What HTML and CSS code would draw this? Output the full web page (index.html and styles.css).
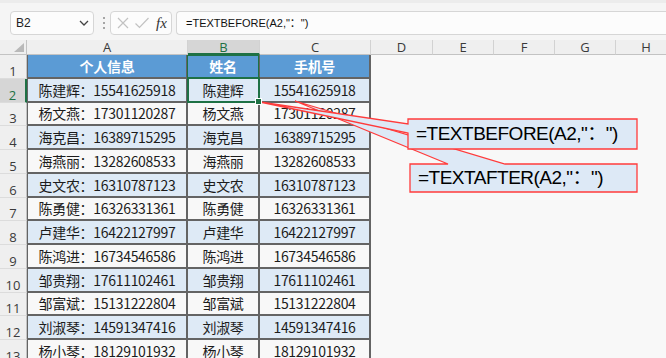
FILE: index.html
```html
<!DOCTYPE html>
<html lang="zh-CN">
<head>
    <meta charset="UTF-8">
    <title>TEXTBEFORE / TEXTAFTER</title>
    <link rel="stylesheet" href="styles.css">
</head>
<body>

<!-- Name box + formula bar -->
<div class="toolbar">
    <div class="namebox">
        <span>B2</span>
        <svg width="10" height="6" viewBox="0 0 10 6"><polyline points="1,1 5,5 9,1" fill="none" stroke="#444" stroke-width="1.3"/></svg>
    </div>
    <svg class="grip" width="4" height="24" viewBox="0 0 4 24">
        <circle cx="2" cy="7" r="1" fill="#8a8a8a"/>
        <circle cx="2" cy="12" r="1" fill="#8a8a8a"/>
        <circle cx="2" cy="17" r="1" fill="#8a8a8a"/>
    </svg>
    <div class="funcbox">
        <svg width="14" height="14" viewBox="0 0 14 14"><path d="M2 2 L12 12 M12 2 L2 12" stroke="#c2c2c2" stroke-width="1.2"/></svg>
        <svg width="16" height="14" viewBox="0 0 16 14"><path d="M1.5 7.5 L5.5 11.5 L14.5 2" fill="none" stroke="#c2c2c2" stroke-width="1.2"/></svg>
        <span class="fx">fx</span>
    </div>
    <div class="formula">=TEXTBEFORE(A2,"：")</div>
</div>

<!-- Sheet -->
<div class="sheet">
    <div class="corner"><svg width="10" height="9" viewBox="0 0 10 9"><polygon points="0,9 10,0 10,9" fill="#b9b9b9"/></svg></div>
    <div class="ch">A</div>
    <div class="ch sel">B</div>
    <div class="ch">C</div>
    <div class="ch">D</div>
    <div class="ch">E</div>
    <div class="ch">F</div>
    <div class="ch">G</div>
    <div class="ch">H</div>

    <div class="rh">1</div>
    <div class="c hd first">个人信息</div>
    <div class="c hd pick-top">姓名</div>
    <div class="c hd">手机号</div>
    <div class="fill"></div>

    <div class="rh sel">2</div>
    <div class="c alt first">陈建辉：15541625918</div>
    <div class="c alt pick">陈建辉</div>
    <div class="c alt">15541625918</div>
    <div class="fill"></div>

    <div class="rh">3</div>
    <div class="c first">杨文燕：17301120287</div>
    <div class="c">杨文燕</div>
    <div class="c">17301120287</div>
    <div class="fill"></div>

    <div class="rh">4</div>
    <div class="c alt first">海克昌：16389715295</div>
    <div class="c alt">海克昌</div>
    <div class="c alt">16389715295</div>
    <div class="fill"></div>

    <div class="rh">5</div>
    <div class="c first">海燕丽：13282608533</div>
    <div class="c">海燕丽</div>
    <div class="c">13282608533</div>
    <div class="fill"></div>

    <div class="rh">6</div>
    <div class="c alt first">史文农：16310787123</div>
    <div class="c alt">史文农</div>
    <div class="c alt">16310787123</div>
    <div class="fill"></div>

    <div class="rh">7</div>
    <div class="c first">陈勇健：16326331361</div>
    <div class="c">陈勇健</div>
    <div class="c">16326331361</div>
    <div class="fill"></div>

    <div class="rh">8</div>
    <div class="c alt first">卢建华：16422127997</div>
    <div class="c alt">卢建华</div>
    <div class="c alt">16422127997</div>
    <div class="fill"></div>

    <div class="rh">9</div>
    <div class="c first">陈鸿进：16734546586</div>
    <div class="c">陈鸿进</div>
    <div class="c">16734546586</div>
    <div class="fill"></div>

    <div class="rh">10</div>
    <div class="c alt first">邹贵翔：17611102461</div>
    <div class="c alt">邹贵翔</div>
    <div class="c alt">17611102461</div>
    <div class="fill"></div>

    <div class="rh">11</div>
    <div class="c first">邹富斌：15131222804</div>
    <div class="c">邹富斌</div>
    <div class="c">15131222804</div>
    <div class="fill"></div>

    <div class="rh">12</div>
    <div class="c alt first">刘淑琴：14591347416</div>
    <div class="c alt">刘淑琴</div>
    <div class="c alt">14591347416</div>
    <div class="fill"></div>

    <div class="rh">13</div>
    <div class="c first">杨小琴：18129101932</div>
    <div class="c">杨小琴</div>
    <div class="c">18129101932</div>
    <div class="fill"></div>
</div>

<!-- Callouts drawn over the sheet -->
<div class="callouts">
    <svg width="666" height="358" viewBox="0 0 666 358">
        <path d="M410 164 H448 L295 101 L505 164 H637 V192 H410 Z" fill="#dde9f6" stroke="#ff3b3b" stroke-width="1.3"/>
        <path d="M408 119 H637 V149 H408 V133 L260 102 L408 124 Z" fill="#dde9f6" stroke="#ff3b3b" stroke-width="1.3"/>
    </svg>
    <div class="ctext t1">=TEXTBEFORE(A2,"：")</div>
    <div class="ctext t2">=TEXTAFTER(A2,"：")</div>
</div>

</body>
</html>
```

FILE: styles.css
```css
body {
    margin: 0;
    width: 666px;
    height: 358px;
    overflow: hidden;
    position: relative;
    background-color: #f8f8f8;
    font-family: "Noto Sans CJK SC", sans-serif;
}
.toolbar {
    height: 40px;
    box-sizing: border-box;
    display: flex;
    align-items: flex-start;
    padding: 8px 0 0 10px;
    background-color: #f5f5f5;
    border-top: 3px solid #ececec;
}
.namebox {
    width: 84px;
    height: 24px;
    box-sizing: border-box;
    display: flex;
    align-items: center;
    justify-content: space-between;
    padding: 0 4px 0 5px;
    background-color: #fcfcfc;
    border: 1px solid #d6d6d6;
    border-radius: 4px;
    font: 12px "Liberation Sans", sans-serif;
    color: #222;
}
.grip {
    margin: 0 4px 0 8px;
}
.funcbox {
    width: 62px;
    height: 24px;
    box-sizing: border-box;
    display: flex;
    align-items: center;
    gap: 4px;
    padding-left: 5px;
    background-color: #fcfcfc;
    border: 1px solid #d6d6d6;
    border-radius: 4px;
}
.fx {
    font: italic 15px "Liberation Serif", serif;
    color: #333;
    margin-left: 2px;
}
.formula {
    flex: 1;
    height: 24px;
    box-sizing: border-box;
    margin-left: 4px;
    padding-left: 9px;
    background-color: #fcfcfc;
    border: 1px solid #d6d6d6;
    border-right: none;
    border-radius: 4px 0 0 4px;
    font: 11px/22px "Liberation Sans", "Noto Sans CJK SC", sans-serif;
    color: #111;
}

/* grid */
.sheet {
    display: grid;
    grid-template-columns: 27px 161px 72px 111px 62px 61px 61px 61px 61px;
    grid-template-rows: 15px repeat(13, 23.75px);
}
.corner {
    background-color: #efefef;
    border-right: 1px solid #c3c3c3;
    border-bottom: 1px solid #c3c3c3;
    display: flex;
    align-items: flex-end;
    justify-content: flex-end;
    padding: 0 2px 2px 0;
}
.ch {
    background-color: #efefef;
    border-right: 1px solid #d2d2d2;
    border-bottom: 1px solid #c3c3c3;
    font: 13px/15px "Open Sans", sans-serif;
    color: #3a3a3a;
    text-align: center;
}
.ch.sel {
    background-color: #d6d6d6;
    color: #1e7145;
    border-bottom: 2px solid #1e7145;
}
.rh {
    background-color: #efefef;
    border-right: 1px solid #c3c3c3;
    border-bottom: 1px solid #dcdcdc;
    display: flex;
    align-items: flex-end;
    justify-content: center;
    font: 13px/14px "Open Sans", sans-serif;
    color: #3a3a3a;
}
.rh.sel {
    background-color: #d6d6d6;
    color: #1e7145;
    border-right: 2px solid #1e7145;
}
.c {
    box-sizing: border-box;
    display: flex;
    align-items: center;
    justify-content: center;
    font-size: 14px;
    letter-spacing: -0.3px;
    color: #1c1c1c;
    border-right: 2px solid #646464;
    border-bottom: 2px solid #646464;
    white-space: nowrap;
}
.c.first {
    border-left: 1px solid #646464;
}
.hd {
    background-color: #5b9bd5;
    color: #fff;
    font-weight: bold;
}
.alt {
    background-color: #deeaf6;
}
.fill {
    grid-column: span 5;
}

/* selection */
.pick-top,
.pick {
    position: relative;
}
.pick-top::after {
    content: "";
    position: absolute;
    top: 0;
    left: -1px;
    right: -1px;
    bottom: -2px;
    border: 1px solid #1e7145;
}
.pick::after {
    content: "";
    position: absolute;
    top: -2px;
    left: -1px;
    right: -2px;
    bottom: -2px;
    border: 2px solid #1e7145;
}
.pick::before {
    content: "";
    position: absolute;
    right: -4px;
    bottom: -4px;
    width: 5px;
    height: 5px;
    background-color: #1e7145;
    border: 1px solid #fff;
    z-index: 1;
}

/* callouts */
.callouts {
    position: absolute;
    left: 0;
    top: 0;
    width: 666px;
    height: 358px;
    pointer-events: none;
}
.callouts svg {
    position: absolute;
    left: 0;
    top: 0;
}
.ctext {
    position: absolute;
    font: 19px "Liberation Sans", "Noto Sans CJK SC", sans-serif;
    letter-spacing: -0.5px;
    color: #000;
    white-space: nowrap;
}
.t1 {
    left: 416px;
    top: 119px;
    line-height: 30px;
}
.t2 {
    left: 418px;
    top: 164px;
    line-height: 28px;
}
```
